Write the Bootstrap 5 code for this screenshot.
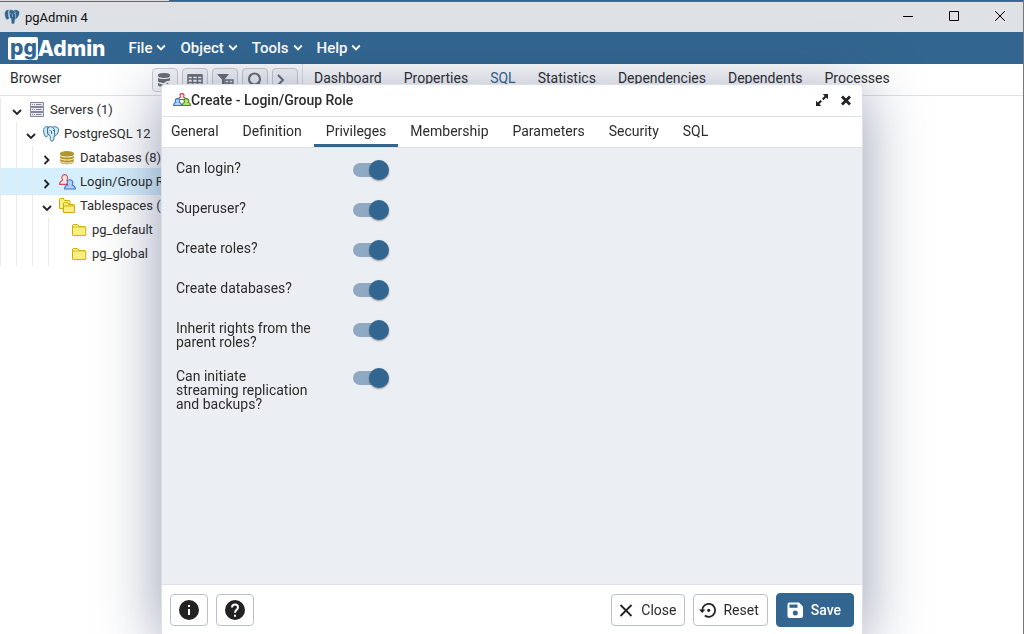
<!DOCTYPE html>
<html lang="en">
<head>
<meta charset="utf-8">
<meta name="viewport" content="width=device-width, initial-scale=1">
<title>pgAdmin 4</title>
<link href="https://cdn.jsdelivr.net/npm/bootstrap@5.3.0/dist/css/bootstrap.min.css" rel="stylesheet">
<style>
  :root { --pg-blue: #326690; --pg-line: #dde0e6; --pg-text: #2c2c2c; --pg-panel: #ebeef3; }
  body { font-family: Roboto, "Liberation Sans", sans-serif; font-size: 14px; color: var(--pg-text); line-height: 20px; }
  svg { display: block; flex: none; }
  .app-window { height: 100vh; overflow: hidden; border-right: 1px solid #777; background: #fff; }
  .desk-strip { height: 1px; background: linear-gradient(90deg, #d9dde0 169px, var(--pg-blue) 169px); }
  .title-bar { height: 31px; background: #dee1e5; border-top: 1px solid #686868; padding: 0 0 0 4px; }
  .title-bar .app-title { font-size: 13px; color: #111; padding: 1px 0 0 1px; }
  .win-btn { width: 46px; height: 30px; border: 0; background: none; padding: 0; }
  .menu-bar { height: 32px; background: var(--pg-blue); padding: 0 8px; }
  .brand-mark { font: 800 21px/23px Inter, sans-serif; color: #fff; text-decoration: none; margin-right: 16px; }
  .brand-mark span { background: #fff; color: var(--pg-blue); border-radius: 2px; height: 23px; padding: 0 1px 0 2px; line-height: 21px; }
  .menu-btn { border: 0; background: none; color: #fff; font-weight: 500; font-size: 15px; padding: 0 7px; }
  .side-pane { width: 303px; border-right: 1px solid var(--pg-line); }
  .pane-head { height: 32px; border-bottom: 1px solid var(--pg-line); }
  .pane-title { padding: 0 0 4px 10px; }
  .tool-btn { width: 26px; height: 24px; border: 1px solid #c9cdd8; border-radius: 4px; background: #f7f8fa; padding: 0; color: #6b6f76; }
  .pane-tab { color: var(--pg-text); text-decoration: none; padding: 4px 11px; }
  .pane-tab.current { color: var(--pg-blue); }
  .tree { font-size: 13px; padding-top: 2px; }
  .tree li { height: 24px; background: repeating-linear-gradient(90deg, #e6eaf1 0 1px, transparent 1px 16px) no-repeat; white-space: nowrap; gap: 4px; }
  .tree .lv1 { padding-left: 9px; background-size: 16px 100%; }
  .tree .lv2 { padding-left: 23px; background-size: 32px 100%; }
  .tree .lv3 { padding-left: 39px; background-size: 48px 100%; }
  .tree .lv4 { padding-left: 71px; background-size: 64px 100%; }
  .tree .picked { background-color: #d6effc; box-shadow: 0 -2px #d6effc, 0 1px #d6effc; }
  .tree .tree-name { padding-left: 1px; }
  .tree button { width: 16px; height: 16px; border: 0; background: none; padding: 0; color: #222; }

  .dialog-layer { position: fixed; inset: 84px 0 0; }
  .dialog-box { width: 702px; max-width: 100%; background: #fff; border: 1px solid var(--pg-line); border-bottom: 0; border-radius: 4px 4px 0 0; box-shadow: 0 8px 60px rgba(40, 55, 100, .5); }
  .dialog-head { height: 32px; border-bottom: 1px solid var(--pg-line); padding: 0 8px 2px 11px; }
  .dialog-head h1 { font-size: 14px; line-height: 20px; font-weight: 500; }
  .dialog-head button { border: 0; background: none; padding: 0; width: 16px; height: 16px; }
  .dialog-tabs { height: 31px; border-bottom: 1px solid var(--pg-line); }
  .dialog-tabs button { border: 0; border-bottom: 3px solid transparent; background: none; padding: 0 12px; color: var(--pg-text); font-size: 14px; }
  .dialog-tabs button:first-child { padding-left: 9px; }
  .dialog-tabs button.active { border-bottom-color: var(--pg-blue); }
  .dialog-body { background: var(--pg-panel); padding: 13px 0 0 1px; }
  .field-row { min-height: 40px; }
  .field-row label { width: 177px; padding: 0 14px 20px 13px; line-height: 14px; }
  .field-row .switch-holder { padding: 2px 13px 0; }
  .switch-input { appearance: none; display: block; width: 32px; height: 14px; margin: 0; border-radius: 7px; background: #90a9c3; position: relative; }
  .switch-input::before { content: ""; position: absolute; right: -4px; top: -3px; width: 20px; height: 20px; border-radius: 50%; background: var(--pg-blue); box-shadow: 0 1px 2px rgba(0, 0, 0, .4); }
  .dialog-foot { height: 50px; border-top: 1px solid var(--pg-line); padding: 0 8px; }
  .foot-btn { height: 32px; border: 1px solid #bac1cd; border-radius: 4px; background: #fff; padding: 0 8px 0 5px; font-size: 14px; color: var(--pg-text); gap: 6px; }
  .foot-btn.icon-only { width: 38px; padding: 0; }
  .foot-btn.save { height: 34px; background: var(--pg-blue); border-color: var(--pg-blue); color: #fff; font-weight: 500; padding: 0 12px 0 8px; }
</style>
</head>
<body>
<svg width="0" height="0" class="position-absolute" aria-hidden="true">
  <symbol id="elephant" viewBox="0 0 16 16">
    <path d="M5.500 1C3 0 .6 1.500.6 4.500c0 2.500 1 6 2.400 6.300.8.200 1.400-.8 2-1.300M5.500 1c-1 1-1.200 3-.8 5-.2 1.500.3 2.500 1.300 3.300M5.500 1C7 .4 8.500.8 9.500 1.300 11.500.2 15.200.6 15.500 3.500c.2 2.300-1.200 4.700-2.600 6-.8.500-1 .7-1.800.8-.2 1.500 0 3.700-1.200 4.500-1.200.6-2.400.2-2.600-1.300-.2-1.500.1-3-.6-4.200C5 8.800 4.500 7.500 4.700 6 4.300 4 4.500 2 5.500 1z"/>
    <path d="M9.500 1.300c1.700 1.200 2.300 3 2 5.200-.1 1.200.3 2 .1 3M6.500 4.500h1M10 4.500h1M8.500 5v3" fill="none"/>
  </symbol>
  <symbol id="chev-down" viewBox="0 0 16 16"><path d="M4 8l4 4 4-4" fill="none" stroke="currentColor" stroke-width="1.800"/></symbol>
  <symbol id="chev-right" viewBox="0 0 16 16"><path d="M5.500 6l4 4-4 4" fill="none" stroke="currentColor" stroke-width="1.800"/></symbol>
  <symbol id="menu-chev" viewBox="0 0 10 8"><path d="M1.200 1.500L5 5.300 8.800 1.500" fill="none" stroke="currentColor" stroke-width="1.900"/></symbol>
  <symbol id="folder" viewBox="0 0 16 16"><path d="M1.500 13V3.500c0-.5.400-1 1-1h4l1.500 2h6c.5 0 .8.400.8.800V13c0 .4-.3.600-.7.600H2.200c-.4 0-.7-.2-.7-.6z" fill="#f7ef7e" stroke="#d3a90c"/><path d="M2 5h12" stroke="#e0bc25"/></symbol>
</svg>

<div class="app-window d-flex flex-column">
  <div class="desk-strip flex-shrink-0"></div>
  <header class="title-bar d-flex align-items-center flex-shrink-0">
    <svg width="16" height="16" fill="#326690" stroke="#dee1e5" stroke-width=".5"><use href="#elephant"/></svg>
    <span class="app-title ms-1 me-auto">pgAdmin 4</span>
    <button class="win-btn" aria-label="Minimize"><svg class="mx-auto" width="12" height="12"><path d="M1 5.500h10" stroke="#000"/></svg></button>
    <button class="win-btn" aria-label="Maximize"><svg class="mx-auto" width="12" height="12"><path d="M1.500.5h9v9h-9z" fill="none" stroke="#000"/></svg></button>
    <button class="win-btn" aria-label="Close window"><svg class="mx-auto" width="12" height="12"><path d="M1 0l10 10M11 0L1 10" stroke="#000"/></svg></button>
  </header>

  <nav class="menu-bar d-flex align-items-center flex-shrink-0">
    <a href="#" class="brand-mark d-flex"><span>pg</span>Admin</a>
    <button class="menu-btn d-flex align-items-center gap-1">File <svg width="10" height="8"><use href="#menu-chev"/></svg></button>
    <button class="menu-btn d-flex align-items-center gap-1">Object <svg width="10" height="8"><use href="#menu-chev"/></svg></button>
    <button class="menu-btn d-flex align-items-center gap-1">Tools <svg width="10" height="8"><use href="#menu-chev"/></svg></button>
    <button class="menu-btn d-flex align-items-center gap-1">Help <svg width="10" height="8"><use href="#menu-chev"/></svg></button>
  </nav>

  <div class="d-flex flex-grow-1">
    <aside class="side-pane flex-shrink-0">
      <div class="pane-head d-flex align-items-center gap-1 pe-1">
        <span class="pane-title me-auto">Browser</span>
        <button class="tool-btn" aria-label="Query Tool"><svg class="mx-auto" width="16" height="16" fill="currentColor"><path d="M1 3c0-1.300 3-2 6-2s6 .7 6 2v1c0 1.300-3 2-6 2S1 5.300 1 4zM1 6c2 1.300 9 1.500 12 0v2.500L9 9.500 7 11C4 11 1 10.300 1 9zM1 11c1.500 1 4 1.400 6 1.300V15c-3 0-6-.7-6-2zM9.500 10.500l5 2.700-5 2.800z"/></svg></button>
        <button class="tool-btn" aria-label="View Data"><svg class="mx-auto" width="16" height="16" fill="none" stroke="currentColor" stroke-width="1.500"><path d="M1 3h14v11H1zM1 7h14M1 10.500h14M5.500 3v11M10.500 3v11"/><path d="M1 3.500h14" stroke-width="2.500"/></svg></button>
        <button class="tool-btn" aria-label="Filtered Rows"><svg class="mx-auto" width="18" height="16" fill="currentColor"><path d="M1 2h12L8.500 7.500V14L6 12V7.500z"/><path d="M9 8h8v6H9zM9 11h8M13 8v6" fill="#eef0f3" stroke="currentColor" stroke-width="1.300"/></svg></button>
        <button class="tool-btn" aria-label="Search Objects"><svg class="mx-auto" width="16" height="16" fill="none" stroke="currentColor" stroke-width="2.200"><circle cx="7.500" cy="7" r="5.500"/><path d="M11 11l4 4"/></svg></button>
        <button class="tool-btn" aria-label="PSQL Tool"><svg class="mx-auto" width="18" height="16" fill="none" stroke="currentColor" stroke-width="2"><path d="M2 3l5 5-5 5M9 13h8"/></svg></button>
      </div>
      <ul class="tree list-unstyled mb-0">
        <li class="lv1 d-flex align-items-center"><button aria-label="Collapse Servers"><svg width="16" height="16"><use href="#chev-down"/></svg></button>
          <svg width="16" height="16" fill="#e9e9f2" stroke="#84849c"><path d="M1.500.5h13v4h-13zM1.500 5.500h13v4h-13zM1.500 10.500h13v4h-13z"/><path d="M3 2.500h1M5 2.500h1M7 2.500h5.500M3 7.500h1M5 7.500h1M7 7.500h5.500M3 12.500h1M5 12.500h1M7 12.500h5.500"/></svg>
          <span class="tree-name">Servers (1)</span></li>
        <li class="lv2 d-flex align-items-center"><button aria-label="Collapse PostgreSQL 12"><svg width="16" height="16"><use href="#chev-down"/></svg></button>
          <svg width="16" height="16" fill="#cfe9f7" stroke="#326f98" stroke-width="1"><use href="#elephant"/></svg>
          <span class="tree-name">PostgreSQL 12</span></li>
        <li class="lv3 d-flex align-items-center"><button aria-label="Expand Databases"><svg width="16" height="16"><use href="#chev-right"/></svg></button>
          <svg width="16" height="16"><path d="M1 4v8c0 3 14 3 14 0V4z" fill="#ad922d"/><path d="M1 4.700c0 3 14 3 14 0M1 7.700c0 3 14 3 14 0M1 10.700c0 3 14 3 14 0" fill="none" stroke="#f5ecc0" stroke-width="1.100"/><ellipse cx="8" cy="3.500" rx="7" ry="2.500" fill="#b19733"/></svg>
          <span class="tree-name">Databases (8)</span></li>
        <li class="lv3 picked d-flex align-items-center"><button aria-label="Expand Login/Group Roles"><svg width="16" height="16"><use href="#chev-right"/></svg></button>
          <svg width="17" height="16" stroke-width="1.100"><path d="M.6 10.400c0-2.600 1.600-3.800 3-4.200C2 3.500 3.200.6 5.700.6S9.400 3.500 7.900 6.200c1.400.4 3 1.600 3 4.200z" fill="#fde6e8" stroke="#d4494e"/><path d="M5.600 15c0-2.600 1.600-3.600 3.200-4-1.500-2.500-.6-5.200 2.100-5.200s3.700 2.700 2.300 5.200c1.400.4 3.200 1.400 3.200 4z" fill="#b3d1f4" stroke="#3a72c4"/></svg>
          <span>Login/Group Roles</span></li>
        <li class="lv3 d-flex align-items-center"><button aria-label="Collapse Tablespaces"><svg width="16" height="16"><use href="#chev-down"/></svg></button>
          <svg width="16" height="16" fill="#f7ef7e" stroke="#d3a90c"><path d="M.5 10.500v-9q0-1 1-1h3l1 2h4.500q1 0 1 1v7z"/><path d="M4.500 14.500v-9q0-1 1-1h3l1 2h5q1 0 1 1v7zM5 8h10"/></svg>
          <span class="tree-name">Tablespaces (2)</span></li>
        <li class="lv4 d-flex align-items-center"><svg width="16" height="16"><use href="#folder"/></svg><span class="tree-name">pg_default</span></li>
        <li class="lv4 d-flex align-items-center"><svg width="16" height="16"><use href="#folder"/></svg><span class="tree-name">pg_global</span></li>
      </ul>
    </aside>
    <main class="flex-grow-1">
      <nav class="pane-head d-flex align-items-start">
        <a href="#" class="pane-tab">Dashboard</a><a href="#" class="pane-tab">Properties</a><a href="#" class="pane-tab current">SQL</a><a href="#" class="pane-tab">Statistics</a><a href="#" class="pane-tab">Dependencies</a><a href="#" class="pane-tab">Dependents</a><a href="#" class="pane-tab">Processes</a>
      </nav>
    </main>
  </div>
</div>

<div class="dialog-layer d-flex justify-content-center">
  <section class="dialog-box d-flex flex-column" role="dialog" aria-labelledby="dialog-title">
    <header class="dialog-head d-flex align-items-center">
      <svg width="18" height="14" stroke-width="1.100"><path d="M5.500 6.500q.3-2 2-2.500C6.400 2.500 7 .6 9 .6s2.600 1.900 1.500 3.400q1.700.5 2 2.500z" fill="#fde6e8" stroke="#cf3d43"/><path d="M.6 12.500q.2-2.800 2.200-3.200C1.500 7.500 2.500 5.600 4.500 5.600S7.500 7.500 6.200 9.300q2.200.4 2.400 3.200z" fill="#b3d1f4" stroke="#3a72c4"/><path d="M9.400 12.500q.2-2.800 2.200-3.200c-1.300-1.800-.3-3.700 1.900-3.700s3 1.900 1.700 3.700q2.100.4 2.200 3.200z" fill="#b5e36f" stroke="#3f8f1c"/></svg>
      <h1 class="mb-0 me-auto" id="dialog-title">Create - Login/Group Role</h1>
      <button class="me-2" aria-label="Expand dialog"><svg width="16" height="16" fill="#222"><path d="M8.800 2H14v5.200L12.200 5.500 9.500 8.200 8 6.700 10.600 4zM2 14V8.800l1.800 1.700L6.500 7.900 8 9.400 5.400 12 7.200 14z"/></svg></button>
      <button aria-label="Close dialog"><svg width="16" height="16" stroke="#222" stroke-width="2.800"><path d="M4 4.500l8 8M12 4.500l-8 8"/></svg></button>
    </header>
    <div class="dialog-tabs d-flex" role="tablist">
      <button role="tab">General</button><button role="tab">Definition</button><button role="tab" class="active" aria-selected="true">Privileges</button><button role="tab">Membership</button><button role="tab">Parameters</button><button role="tab">Security</button><button role="tab">SQL</button>
    </div>
    <form class="dialog-body flex-grow-1">
      <div class="field-row d-flex"><label for="p1">Can login?</label><div class="switch-holder"><input class="switch-input" type="checkbox" role="switch" id="p1" checked></div></div>
      <div class="field-row d-flex"><label for="p2">Superuser?</label><div class="switch-holder"><input class="switch-input" type="checkbox" role="switch" id="p2" checked></div></div>
      <div class="field-row d-flex"><label for="p3">Create roles?</label><div class="switch-holder"><input class="switch-input" type="checkbox" role="switch" id="p3" checked></div></div>
      <div class="field-row d-flex"><label for="p4">Create databases?</label><div class="switch-holder"><input class="switch-input" type="checkbox" role="switch" id="p4" checked></div></div>
      <div class="field-row d-flex"><label for="p5">Inherit rights from the parent roles?</label><div class="switch-holder"><input class="switch-input" type="checkbox" role="switch" id="p5" checked></div></div>
      <div class="field-row d-flex"><label for="p6">Can initiate<br>streaming replication<br>and backups?</label><div class="switch-holder"><input class="switch-input" type="checkbox" role="switch" id="p6" checked></div></div>
    </form>
    <footer class="dialog-foot d-flex align-items-center gap-2">
      <button class="foot-btn icon-only" aria-label="Information"><svg class="mx-auto" width="20" height="20"><circle cx="10" cy="10" r="10" fill="#222"/><path d="M9 5h2v2H9zM9 9h2v6H9z" fill="#fff"/></svg></button>
      <button class="foot-btn icon-only me-auto" aria-label="Help"><svg class="mx-auto" width="20" height="20"><circle cx="10" cy="10" r="10" fill="#222"/><path d="M7 7.500c0-4 6-4 6 0 0 2.200-3 2.500-3 5.200" fill="none" stroke="#fff" stroke-width="2"/><path d="M9 14.800h2v2H9z" fill="#fff"/></svg></button>
      <button class="foot-btn d-flex align-items-center"><svg width="18" height="18"><path d="M3.500 4l11 11M14.500 4l-11 11" stroke="#222" stroke-width="1.800"/></svg>Close</button>
      <button class="foot-btn d-flex align-items-center"><svg width="18" height="18" fill="none" stroke="#222" stroke-width="1.800"><path d="M3.200 9.500a6.500 6.500 0 1 1 2.600 5"/><path d="M0 8.500h6.400L3.200 12z" fill="#222" stroke="none"/><circle cx="9.700" cy="9.300" r="1.600" fill="#222" stroke="none"/></svg>Reset</button>
      <button class="foot-btn save d-flex align-items-center"><svg width="20" height="20"><path d="M4.500 2.500h9.500l4 4v9.500q0 2-2 2H4.500q-2 0-2-2V4.500q0-2 2-2z" fill="#fff"/><path d="M4.500 4.500h8v3.300h-8z" fill="#326690"/><circle cx="10.300" cy="13" r="2.500" fill="#326690"/></svg>Save</button>
    </footer>
  </section>
</div>
<script src="https://cdn.jsdelivr.net/npm/bootstrap@5.3.0/dist/js/bootstrap.bundle.min.js"></script>
</body>
</html>
